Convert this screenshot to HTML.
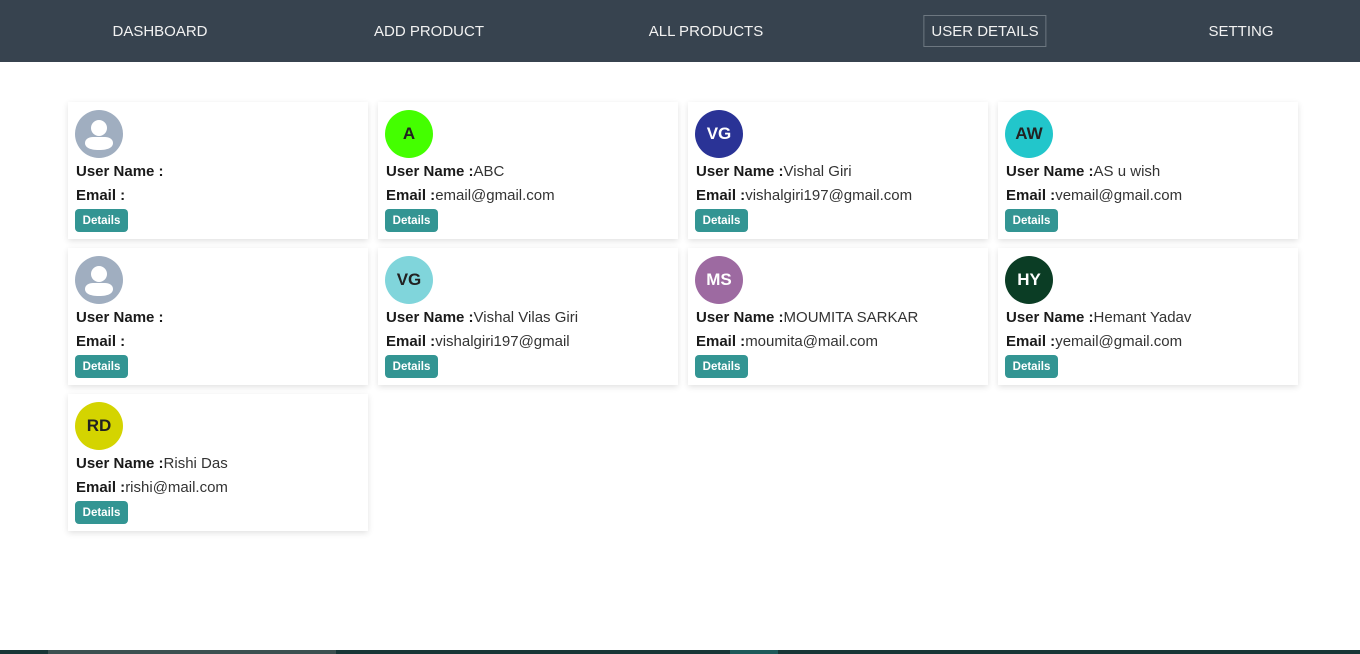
<!DOCTYPE html>
<html><head><meta charset="utf-8"><style>
*{margin:0;padding:0;box-sizing:border-box}
body{width:1360px;height:654px;background:#fff;font-family:"Liberation Sans",sans-serif;position:relative;overflow:hidden}
.nav{position:absolute;left:0;top:0;width:1360px;height:62px;background:#37434f}
.nav span{position:absolute;top:23px;color:#f2f2f2;font-size:15px;transform:translateX(-50%);white-space:nowrap}
.nav .act{top:15px;padding:7px 7px 6px;border:1px solid #6d7780}
.card{position:absolute;width:300px;height:137px;background:#fff;box-shadow:0 2px 6px rgba(0,0,0,.12)}
.av{position:absolute;left:7px;top:8px;width:48px;height:48px;border-radius:50%;display:flex;align-items:center;justify-content:center;font-size:17px;font-weight:bold;color:#222}
.l{position:absolute;left:8px;font-size:15px;color:#333;white-space:nowrap}
.l b{color:#1a1a1a}
.l1{top:61px}.l2{top:85px}
.btn{position:absolute;left:7px;top:107px;width:53px;height:23px;border-radius:4px;background:#339593;color:#fff;font-size:11.5px;font-weight:bold;text-align:center;line-height:25px}
.w{color:#fff!important}
.foot{position:absolute;left:0;top:650px;width:1360px;height:4px;background:#173636}
</style></head><body>
<div class="nav">
<span style="left:160px">DASHBOARD</span>
<span style="left:429px">ADD PRODUCT</span>
<span style="left:706px">ALL PRODUCTS</span>
<span class="act" style="left:985px">USER DETAILS</span>
<span style="left:1241px">SETTING</span>
</div>

<div class="card" style="left:68px;top:102px"><div class="av" style="background:#a0aec0"><svg width="48" height="48" viewBox="0 0 48 48"><circle cx="24" cy="18" r="8" fill="#fff"/><path d="M10 33c0-4 4-6 8-6h12c4 0 8 2 8 6s-4 7-14 7-14-3-14-7z" fill="#fff"/></svg></div><div class="l l1"><b>User Name :</b></div><div class="l l2"><b>Email :</b></div><div class="btn">Details</div></div>
<div class="card" style="left:378px;top:102px"><div class="av" style="background:#44ff00">A</div><div class="l l1"><b>User Name :</b>ABC</div><div class="l l2"><b>Email :</b>email@gmail.com</div><div class="btn">Details</div></div>
<div class="card" style="left:688px;top:102px"><div class="av w" style="background:#2a3396">VG</div><div class="l l1"><b>User Name :</b>Vishal Giri</div><div class="l l2"><b>Email :</b>vishalgiri197@gmail.com</div><div class="btn">Details</div></div>
<div class="card" style="left:998px;top:102px"><div class="av" style="background:#22c6cb">AW</div><div class="l l1"><b>User Name :</b>AS u wish</div><div class="l l2"><b>Email :</b>vemail@gmail.com</div><div class="btn">Details</div></div>

<div class="card" style="left:68px;top:248px"><div class="av" style="background:#a0aec0"><svg width="48" height="48" viewBox="0 0 48 48"><circle cx="24" cy="18" r="8" fill="#fff"/><path d="M10 33c0-4 4-6 8-6h12c4 0 8 2 8 6s-4 7-14 7-14-3-14-7z" fill="#fff"/></svg></div><div class="l l1"><b>User Name :</b></div><div class="l l2"><b>Email :</b></div><div class="btn">Details</div></div>
<div class="card" style="left:378px;top:248px"><div class="av" style="background:#80d5db">VG</div><div class="l l1"><b>User Name :</b>Vishal Vilas Giri</div><div class="l l2"><b>Email :</b>vishalgiri197@gmail</div><div class="btn">Details</div></div>
<div class="card" style="left:688px;top:248px"><div class="av w" style="background:#9d6aa1">MS</div><div class="l l1"><b>User Name :</b>MOUMITA SARKAR</div><div class="l l2"><b>Email :</b>moumita@mail.com</div><div class="btn">Details</div></div>
<div class="card" style="left:998px;top:248px"><div class="av w" style="background:#0b3d25">HY</div><div class="l l1"><b>User Name :</b>Hemant Yadav</div><div class="l l2"><b>Email :</b>yemail@gmail.com</div><div class="btn">Details</div></div>

<div class="card" style="left:68px;top:394px"><div class="av" style="background:#d4d400">RD</div><div class="l l1"><b>User Name :</b>Rishi Das</div><div class="l l2"><b>Email :</b>rishi@mail.com</div><div class="btn">Details</div></div>

<div class="foot"><div style="position:absolute;left:48px;width:288px;height:4px;background:#3c5050"></div><div style="position:absolute;left:730px;width:48px;height:4px;background:#1d5a5a"></div></div>
</body></html>
